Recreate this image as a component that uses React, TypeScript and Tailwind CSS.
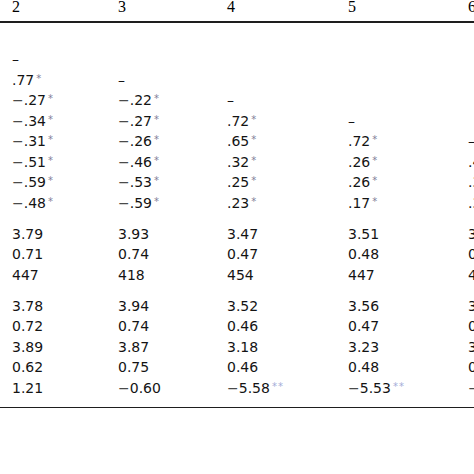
const HEAD = ['2', '3', '4', '5', '6'];

type Cell = string | null;

// each row: cols 2..6, "*" suffix = superscript marks
const GROUP_A: Cell[][] = [
  [null, null, null, null, null],
  ['–', null, null, null, null],
  ['.77*', '–', null, null, null],
  ['−.27*', '−.22*', '–', null, null],
  ['−.34*', '−.27*', '.72*', '–', null],
  ['−.31*', '−.26*', '.65*', '.72*', '–'],
  ['−.51*', '−.46*', '.32*', '.26*', '.44*'],
  ['−.59*', '−.53*', '.25*', '.26*', '.38*'],
  ['−.48*', '−.59*', '.23*', '.17*', '.35*'],
];

const GROUP_B: Cell[][] = [
  ['3.79', '3.93', '3.47', '3.51', '3.62'],
  ['0.71', '0.74', '0.47', '0.48', '0.52'],
  ['447', '418', '454', '447', '449'],
];

const GROUP_C: Cell[][] = [
  ['3.78', '3.94', '3.52', '3.56', '3.60'],
  ['0.72', '0.74', '0.46', '0.47', '0.50'],
  ['3.89', '3.87', '3.18', '3.23', '3.35'],
  ['0.62', '0.75', '0.46', '0.48', '0.49'],
  ['1.21', '−0.60', '−5.58**', '−5.53**', '−4.12**'],
];

const COL_W = ['w-[106px]', 'w-[109px]', 'w-[121px]', 'w-[120px]', 'w-[80px]'];

function Value({ v }: { v: Cell }) {
  if (!v) return null;
  const m = v.match(/^(−?)([^*]*)(\**)$/);
  if (!m) return <span>{v}</span>;
  const [, minus, num, stars] = m;
  return (
    <span className="whitespace-nowrap">
      {minus && <span className="text-[#4a4a4a]">{minus}</span>}
      {num}
      {stars && (
        <sup
          className={
            stars.length > 1
              ? 'relative -top-[3px] ml-[2px] text-[10px] tracking-[1px] text-[#a4aed8]'
              : 'relative -top-[3px] ml-[2px] text-[10px] text-[#7f8098]'
          }
        >
          {stars}
        </sup>
      )}
    </span>
  );
}

function Row({ cells }: { cells: Cell[] }) {
  return (
    <div className="flex h-[20.5px] items-center whitespace-nowrap pl-[12px]">
      {cells.map((c, i) => (
        <div key={i} className={`${COL_W[i]} shrink-0`}>
          <Value v={c} />
        </div>
      ))}
    </div>
  );
}

export default function App() {
  return (
    <div className="h-[474px] w-[474px] overflow-hidden bg-white text-[#141414]">
      <div className="w-[560px]">
        <div
          className="flex h-[21px] pl-[12px] text-[16px] leading-[14px] text-black"
          style={{ fontFamily: '"Liberation Serif", "Times New Roman", serif' }}
        >
          {HEAD.map((h, i) => (
            <div key={h} className={`${COL_W[i]} shrink-0`}>
              {h}
            </div>
          ))}
        </div>
        <div className="h-[1.5px] bg-[#1e1e1e]" />

        <div
          className="pb-[8.5px] pt-[6px] text-[14px] leading-[20.5px]"
          style={{ fontFamily: '"DejaVu Sans", "Noto Sans", sans-serif' }}
        >
          <div>
            {GROUP_A.map((r, i) => (
              <Row key={i} cells={r} />
            ))}
          </div>
          <div className="mt-[10.5px]">
            {GROUP_B.map((r, i) => (
              <Row key={i} cells={r} />
            ))}
          </div>
          <div className="mt-[10.5px]">
            {GROUP_C.map((r, i) => (
              <Row key={i} cells={r} />
            ))}
          </div>
        </div>
        <div className="h-[1.5px] bg-[#1e1e1e]" />
      </div>
    </div>
  );
}
